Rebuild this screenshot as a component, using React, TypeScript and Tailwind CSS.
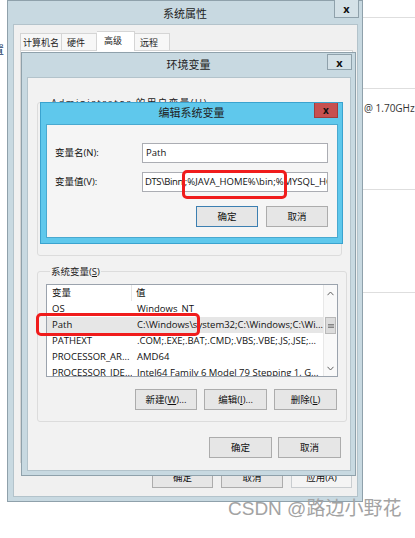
import React from "react";

const F = "font-['Open_Sans','Noto_Sans_CJK_SC',sans-serif]";

function Btn({ children, className = "" }: { children: React.ReactNode; className?: string }) {
  return (
    <div
      className={`h-[21px] flex items-center justify-center border bg-[#e6e6e6] text-[9.5px] leading-none text-[#111] ${className}`}
    >
      {children}
    </div>
  );
}

function Chevron({ up }: { up?: boolean }) {
  return (
    <svg width="7" height="5" viewBox="0 0 7 5">
      <path d={up ? "M0.5 4.2 L3.5 1 L6.5 4.2" : "M0.5 0.8 L3.5 4 L6.5 0.8"} fill="none" stroke="#606060" strokeWidth="1" />
    </svg>
  );
}

const rows: [string, string, boolean][] = [
  ["OS", "Windows_NT", false],
  ["Path", "C:\\Windows\\system32;C:\\Windows;C:\\Wi...", true],
  ["PATHEXT", ".COM;.EXE;.BAT;.CMD;.VBS;.VBE;.JS;.JSE;...", false],
  ["PROCESSOR_AR...", "AMD64", false],
  ["PROCESSOR_IDE...", "Intel64 Family 6 Model 79 Stepping 1, G...", false],
];

export default function App() {
  return (
    <div className={`relative w-[415px] h-[538px] overflow-hidden bg-white ${F}`}>
      {/* background web page */}
      <div className="absolute left-[363px] top-0 w-[52px] h-[300px] flex flex-col">
        <div className="h-[17px]" />
        <div className="h-px bg-[#dedede]" />
        <div className="h-[70px]" />
        <div className="h-px bg-[#dedede]" />
        <div className="h-[13px]" />
        <div className="text-[10px] leading-[12px] text-[#333] pl-px whitespace-nowrap">@ 1.70GHz</div>
        <div className="h-[75px]" />
        <div className="h-px bg-[#dedede]" />
        <div className="h-[102px]" />
        <div className="h-px bg-[#dedede]" />
      </div>
      <div className="absolute left-[-7px] top-[43px] text-[11px] leading-[13px] text-[#2a3f6a]">置</div>

      {/* 系统属性 */}
      <div className="absolute left-[7px] top-0 w-[356px] h-[502px] border border-[#8fa1ab] bg-[#c8d9e1] flex flex-col">
        <div className="relative h-[23px] shrink-0 flex items-center justify-center text-[11px] text-[#222]">
          <span className="mt-[3px]">系统属性</span>
          <div className="absolute right-[3px] top-[-1px] w-[25px] h-[18px] border border-t-0 border-[#8fa1ab] bg-[#d4e1e7] flex items-center justify-center text-[11px] font-bold leading-none text-[#111]">
            x
          </div>
        </div>
        <div className="flex-1 ml-[5px] mr-[4px] mb-[4px] border border-[#b3c3cb] bg-[#f0f0f0] flex flex-col pl-[6px] pr-[4px] pt-[6px]">
          <div className="flex items-end h-[20px] text-[9px] leading-none text-[#222] relative z-10">
            <div className="w-[42px] h-[17px] border border-[#d5d5d5] border-b-0 bg-[#f7f7f7] flex items-center justify-center mb-px">计算机名</div>
            <div className="w-[35px] h-[17px] border border-[#d5d5d5] border-b-0 border-l-0 bg-[#f7f7f7] flex items-center pl-[5px] mb-px">硬件</div>
            <div className="w-[38px] h-[20px] border border-[#d5d5d5] border-b-0 border-l-0 bg-white flex items-center pl-[7px] pb-[3px]">高级</div>
            <div className="w-[35px] h-[17px] border border-[#d5d5d5] border-b-0 border-l-0 bg-[#f7f7f7] flex items-center pl-[5px] mb-px">远程</div>
          </div>
          <div className="h-[413px] -mt-px border border-[#d5d5d5] bg-white" />
          <div className="flex justify-end gap-[8px] mt-[4px] pr-px">
            <Btn className="w-[61px] border-[#acacac]">确定</Btn>
            <Btn className="w-[62px] border-[#acacac]">取消</Btn>
            <Btn className="w-[61px] border-[#c9cdd0] bg-[#f4f4f4] text-[#8a8a8a]">应用(A)</Btn>
          </div>
        </div>
      </div>

      {/* 环境变量 */}
      <div className="absolute left-[21px] top-[52px] w-[335px] h-[424px] border border-[#8fa1ab] bg-[#c8d9e1] flex flex-col">
        <div className="relative h-[24px] shrink-0 flex items-center justify-center text-[11px] text-[#222]">
          <span>环境变量</span>
          <div className="absolute right-[3px] top-[1px] w-[25px] h-[16px] border border-[#8fa1ab] bg-[#d4e1e7] flex items-center justify-center text-[11px] font-bold leading-none text-[#111]">
            x
          </div>
        </div>
        <div className="flex-1 ml-[5px] mr-[4px] mb-[4px] border border-[#b3c3cb] bg-[#f2f2f2] flex flex-col pl-[9px] pr-[8px] pt-[18px]">
          <fieldset className="h-[160px] border border-[#dcdcdc] rounded-[3px] px-[8px]">
            <legend className="ml-[4px] px-px text-[9.5px] leading-[13px] text-[#222] tracking-[1.5px]">Administrator 的用户变量(U)</legend>
          </fieldset>
          <fieldset className="mt-[9px] border border-[#dcdcdc] rounded-[3px] px-[8px] pb-[11px]">
            <legend className="ml-[4px] px-px text-[9.5px] leading-[13px] text-[#222]">
              系统变量(<span className="underline">S</span>)
            </legend>
            <div className="mt-[6px] h-[93px] border border-[#9ba3ad] bg-white flex overflow-hidden">
              <div className="flex-1 flex flex-col text-[9.5px] leading-none text-[#111] overflow-hidden">
                <div className="h-[16px] shrink-0 flex">
                  <div className="w-[85px] border-r border-[#e5e5e5] flex items-center pl-[5px]">变量</div>
                  <div className="flex-1 flex items-center pl-[4px]">值</div>
                </div>
                {rows.map(([n, v, sel]) => (
                  <div key={n} className={`h-[16px] shrink-0 flex whitespace-nowrap ${sel ? "bg-[#e6e6e6]" : ""}`}>
                    <div className="w-[85px] flex items-center pl-[5px] overflow-hidden">{n}</div>
                    <div className="flex-1 flex items-center pl-[5px] overflow-hidden">{v}</div>
                  </div>
                ))}
              </div>
              <div className="w-[14px] shrink-0 border-l border-[#e8e8e8] bg-[#f9f9f9] flex flex-col">
                <div className="h-[16px] flex items-center justify-center">
                  <Chevron up />
                </div>
                <div className="h-[16px]" />
                <div className="h-[17px] mx-px border border-[#b9b9b9] bg-[#dcdcdc] flex items-center justify-center">
                  <svg width="6" height="6" viewBox="0 0 6 6">
                    <path d="M0 1.5 H6 M0 3 H6 M0 4.5 H6" stroke="#707070" strokeWidth="0.8" />
                  </svg>
                </div>
                <div className="flex-1" />
                <div className="h-[15px] flex items-center justify-center">
                  <Chevron />
                </div>
              </div>
            </div>
            <div className="mt-[12px] flex justify-end gap-[7px] pr-px">
              <Btn className="w-[62px] border-[#acacac]">
                新建(<span className="underline">W</span>)...
              </Btn>
              <Btn className="w-[63px] border-[#acacac]">
                编辑(<span className="underline">I</span>)...
              </Btn>
              <Btn className="w-[63px] border-[#acacac]">
                删除(<span className="underline">L</span>)
              </Btn>
            </div>
          </fieldset>
          <div className="mt-[15px] flex justify-end gap-[6px] pr-px">
            <Btn className="w-[63px] border-[#acacac]">确定</Btn>
            <Btn className="w-[63px] border-[#acacac]">取消</Btn>
          </div>
        </div>
      </div>

      {/* 编辑系统变量 */}
      <div className="absolute left-[40px] top-[102px] w-[303px] h-[142px] border border-[#3aa3cf] bg-[#5fc8ec] flex flex-col">
        <div className="relative h-[21px] shrink-0 flex items-center justify-center text-[11px] text-[#222]">
          <span>编辑系统变量</span>
          <div className="absolute right-[4px] top-0 w-[24px] h-[15px] border border-t-0 border-[#a33c3c] bg-[#c75050] flex items-center justify-center text-[10px] font-bold leading-none text-[#111]">
            x
          </div>
        </div>
        <div className="flex-1 ml-[5px] mr-[4px] mb-[5px] border border-[#49a9d0] bg-[#f5f5f5] flex flex-col pl-[8px] pr-[9px] pt-[18px]">
          <div className="flex items-center h-[20px]">
            <div className="w-[87px] text-[9.5px] leading-none text-[#111]">变量名(N):</div>
            <div className="flex-1 h-[20px] border border-[#abadb3] bg-white flex items-center pl-[3px] text-[9.5px] leading-none text-[#111]">Path</div>
          </div>
          <div className="flex items-center h-[20px] mt-[9px]">
            <div className="w-[87px] text-[9.5px] leading-none text-[#111]">变量值(V):</div>
            <div className="flex-1 h-[20px] border border-[#abadb3] bg-white flex items-center pl-[2px] text-[9.5px] leading-none text-[#111] overflow-hidden whitespace-nowrap">
              <span className="tracking-[-0.4px]">DTS\Binn</span>
              <span className="ml-[2px]">;%</span>
              <span className="inline-block w-px h-[12px] bg-[#111]" />
              <span>JAVA_HOME%\bin;%MYSQL_HOME%\bin</span>
            </div>
          </div>
          <div className="mt-[14px] flex justify-end gap-[8px]">
            <Btn className="w-[62px] border-[#3c7fb1]">确定</Btn>
            <Btn className="w-[62px] border-[#acacac]">取消</Btn>
          </div>
        </div>
      </div>

      {/* red annotation boxes */}
      <div className="absolute left-[182px] top-[170px] w-[105px] h-[29px] border-[3px] border-[#f01c1c] rounded-[5px]" />
      <div className="absolute left-[36px] top-[313px] w-[164px] h-[23px] border-[3px] border-[#f01c1c] rounded-[5px]" />

      {/* watermark */}
      <div className="absolute left-[228px] top-[497px] text-[19px] leading-[24px] text-[#a3a3a3] whitespace-nowrap font-['Liberation_Sans','Noto_Sans_CJK_SC',sans-serif]">
        CSDN @路边小野花
      </div>
    </div>
  );
}
